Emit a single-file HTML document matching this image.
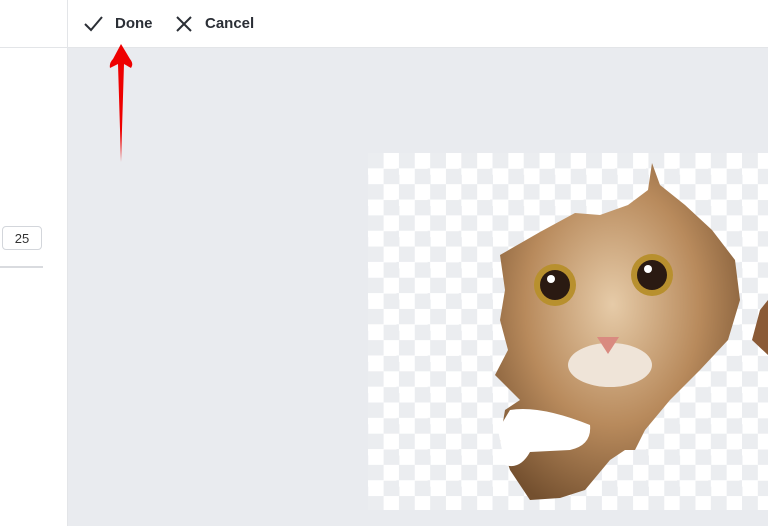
<!DOCTYPE html>
<html><head><style>
body{margin:0;width:768px;height:526px;overflow:hidden;background:#e9ebef;font-family:"Liberation Sans",sans-serif;position:relative}
.left{position:absolute;left:0;top:0;width:67px;height:526px;background:#fff;border-right:1px solid #e3e5e8}
.top{position:absolute;left:68px;top:0;width:700px;height:47px;background:#fff;border-bottom:1px solid #e3e5e8}
.lh{position:absolute;left:0;top:47px;width:67px;height:1px;background:#e3e5e8}
.inp{position:absolute;left:2px;top:226px;width:40px;height:24px;border:1px solid #d3d6db;border-radius:4px;box-sizing:border-box;font-size:13px;color:#333;text-align:center;line-height:23px}
.sl{position:absolute;left:0;top:266px;width:43px;height:2px;background:#d9dbdf}
.btn{position:absolute;top:15px;font-size:15px;font-weight:bold;color:#2b2f36}
.chk{position:absolute;left:368px;top:153px;width:400px;height:357px;background-color:#fff;background-image:conic-gradient(#ebedf0 25%,#fff 0 50%,#ebedf0 0 75%,#fff 0);background-size:31.2px 31.2px;background-position:15.6px 0}
</style></head><body>
<div class="left"></div><div class="lh"></div>
<div class="inp">25</div><div class="sl"></div>
<div class="top"></div>
<svg style="position:absolute;left:84px;top:15px" width="20" height="18"><path d="M1 9 L7 15 L18 2" stroke="#2b2f36" stroke-width="2" fill="none"/></svg>
<div class="btn" style="left:115px">Done</div>
<svg style="position:absolute;left:176px;top:16px" width="16" height="16"><path d="M1 1 L15 15 M15 1 L1 15" stroke="#2b2f36" stroke-width="2" fill="none"/></svg>
<div class="btn" style="left:205px">Cancel</div>
<div class="chk"></div>
<svg style="position:absolute;left:0;top:0" width="768" height="526">
<defs><radialGradient id="g" cx="0.48" cy="0.42" r="0.65"><stop offset="0" stop-color="#e6cba8"/><stop offset="0.55" stop-color="#b88a5c"/><stop offset="1" stop-color="#74502f"/></radialGradient></defs>
<path d="M110 68 Q109 63 113 59 L121 44 L130 59 Q134 64 131 68 L124 64 L121 162 L118 64 Z" fill="#e00"/>
<polygon points="500,255 540,232 575,213 600,215 628,205 648,190 652,163 660,185 685,205 712,230 735,260 740,300 728,340 700,370 670,400 645,430 635,450 625,450 610,460 585,490 560,498 530,500 510,470 500,440 505,410 520,400 495,375 508,350 500,320 505,290" fill="url(#g)"/>
<path d="M760 310 L768 300 L768 355 L752 340 Z" fill="#8a5a36"/>
<path d="M510 410 Q540 405 590 425 Q592 445 570 450 L530 452 Q520 470 505 465 L498 430 Z" fill="#fff"/>
<ellipse cx="610" cy="365" rx="42" ry="22" fill="#efe4d8"/>
<circle cx="555" cy="285" r="21" fill="#b8902e"/><circle cx="555" cy="285" r="15" fill="#2a1a12"/><circle cx="551" cy="279" r="4" fill="#fff"/>
<circle cx="652" cy="275" r="21" fill="#b8902e"/><circle cx="652" cy="275" r="15" fill="#2a1a12"/><circle cx="648" cy="269" r="4" fill="#fff"/>
<path d="M597 337 L619 337 L608 354 Z" fill="#d98a80"/>
</svg>
</body></html>
